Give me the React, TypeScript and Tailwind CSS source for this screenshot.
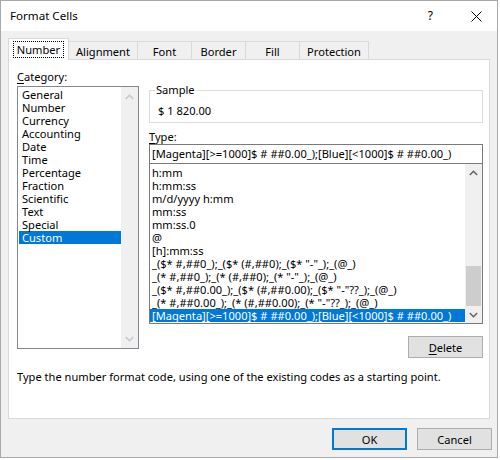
import React from "react";

const categories = [
  "General",
  "Number",
  "Currency",
  "Accounting",
  "Date",
  "Time",
  "Percentage",
  "Fraction",
  "Scientific",
  "Text",
  "Special",
  "Custom",
];

const types = [
  "h:mm",
  "h:mm:ss",
  "m/d/yyyy h:mm",
  "mm:ss",
  "mm:ss.0",
  "@",
  "[h]:mm:ss",
  '_($* #,##0_);_($* (#,##0);_($* "-"_);_(@_)',
  '_(* #,##0_);_(* (#,##0);_(* "-"_);_(@_)',
  '_($* #,##0.00_);_($* (#,##0.00);_($* "-"??_);_(@_)',
  '_(* #,##0.00_);_(* (#,##0.00);_(* "-"??_);_(@_)',
  "[Magenta][>=1000]$ # ##0.00_);[Blue][<1000]$ # ##0.00_)",
];

function Chevron({ up, color }: { up?: boolean; color: string }) {
  return (
    <svg width="9" height="6" viewBox="0 0 9 6">
      <path
        d={up ? "M0.8 5 L4.5 1.3 L8.2 5" : "M0.8 1 L4.5 4.7 L8.2 1"}
        fill="none"
        stroke={color}
        strokeWidth="1.4"
      />
    </svg>
  );
}

function Tab({ label, w, selected }: { label: string; w: string; selected?: boolean }) {
  if (selected) {
    return (
      <div
        className={`relative z-10 h-[22px] ${w} flex items-center justify-center border border-b-0 border-[#d9d9d9] bg-white`}
      >
        <span className="px-[3px] leading-[13px] py-[1px] border border-dotted border-black">{label}</span>
      </div>
    );
  }
  return (
    <div
      className={`h-[19px] ${w} flex items-center justify-center border-t border-r border-[#d9d9d9] bg-[#f0f0f0] pt-[1px]`}
    >
      {label}
    </div>
  );
}

export default function App() {
  return (
    <div className="w-[500px] h-[460px] bg-white font-['Noto_Sans',sans-serif] text-[11.1px] leading-[13px] text-black">
      <div className="w-[498px] h-[458px] border border-[#a9a9a9] bg-[#f0f0f0] flex flex-col">
        {/* Title bar */}
        <div className="h-[30px] bg-white flex items-center pl-[9px] pr-[15px]">
          <span className="flex-1 pb-[1px] text-[11.6px]">Format Cells</span>
          <span className="mr-[38px] pb-[1px] text-[12px]">?</span>
          <svg width="11" height="11" viewBox="0 0 11 11">
            <path d="M0.5 0.5 L10.5 10.5 M10.5 0.5 L0.5 10.5" stroke="#000" strokeWidth="1" />
          </svg>
        </div>

        {/* Tabs */}
        <div className="mt-[7px] pl-[7px] flex items-end -mb-px">
          <Tab label="Number" w="w-[61px]" selected />
          <Tab label="Alignment" w="w-[69px]" />
          <Tab label="Font" w="w-[54px]" />
          <Tab label="Border" w="w-[54px]" />
          <Tab label="Fill" w="w-[54px]" />
          <Tab label="Protection" w="w-[69px]" />
        </div>

        {/* Panel */}
        <div className="relative mx-[7px] h-[360px] border border-[#d9d9d9] bg-white flex flex-col pl-[8px] pr-[6px]">
          <div className="flex h-[298px]">
            {/* Category column */}
            <div className="w-[122px] flex flex-col">
              <div className="h-[26px] pt-[10px]">
                <span className="underline underline-offset-2">C</span>ategory:
              </div>
              <div className="h-[263px] border border-[#828790] bg-white flex">
                <div className="flex-1 pt-[1px] pl-[1px]">
                  {categories.map((c) => (
                    <div
                      key={c}
                      className={`h-[13px] pl-[3px] ${c === "Custom" ? "bg-[#0078d7] text-white" : ""}`}
                    >
                      {c}
                    </div>
                  ))}
                </div>
                <div className="w-[17px] bg-[#f0f0f0] flex flex-col items-center justify-between pt-[7px] pb-[6px]">
                  <Chevron up color="#c5c5c5" />
                  <Chevron color="#c5c5c5" />
                </div>
              </div>
            </div>

            {/* Right column */}
            <div className="ml-[10px] w-[334px] flex flex-col">
              <div className="relative mt-[30px] h-[33px] border border-[#dcdcdc] pl-[8px] pt-[13px]">
                <span className="absolute left-[5px] top-[-8px] bg-white px-[1px]">Sample</span>
                $ 1 820.00
              </div>
              <div className="mt-[7px] h-[14px]">
                <span className="underline underline-offset-2">T</span>ype:
              </div>
              <div className="h-[20px] border border-[#7a7a7a] bg-white pl-[2px] pt-[2px] whitespace-nowrap">
                [Magenta][&gt;=1000]$ # ##0.00_);[Blue][&lt;1000]$ # ##0.00_)
              </div>
              <div className="-mt-px h-[161px] border border-[#7a7a7a] bg-white flex">
                <div className="flex-1 pt-[2px]">
                  {types.map((t, i) => (
                    <div
                      key={i}
                      className={`h-[13px] pl-[2px] whitespace-nowrap ${i === types.length - 1 ? "bg-[#0078d7] text-white" : ""}`}
                    >
                      {t}
                    </div>
                  ))}
                </div>
                <div className="w-[17px] bg-[#f0f0f0] flex flex-col">
                  <div className="h-[17px] flex items-center justify-center">
                    <Chevron up color="#606060" />
                  </div>
                  <div className="flex-1 flex flex-col justify-end px-[1px]">
                    <div className="h-[40px] bg-[#cdcdcd]" />
                  </div>
                  <div className="h-[17px] flex items-center justify-center">
                    <Chevron color="#606060" />
                  </div>
                </div>
              </div>
              <div className="mt-[12px] self-end w-[75px] h-[22px] border border-[#adadad] bg-[#e1e1e1] flex items-center justify-center">
                <span>
                  <span className="underline underline-offset-2">D</span>elete
                </span>
              </div>
            </div>
          </div>
          <div className="mt-[12px]">
            Type the number format code, using one of the existing codes as a starting point.
          </div>
        </div>

        {/* Footer */}
        <div className="mt-[9px] flex justify-end gap-[10px] pr-[5px]">
          <div className="w-[75px] h-[22px] border-2 border-[#0078d7] bg-[#e1e1e1] flex items-center justify-center">
            OK
          </div>
          <div className="w-[75px] h-[22px] border border-[#adadad] bg-[#e1e1e1] flex items-center justify-center">
            Cancel
          </div>
        </div>
      </div>
    </div>
  );
}
